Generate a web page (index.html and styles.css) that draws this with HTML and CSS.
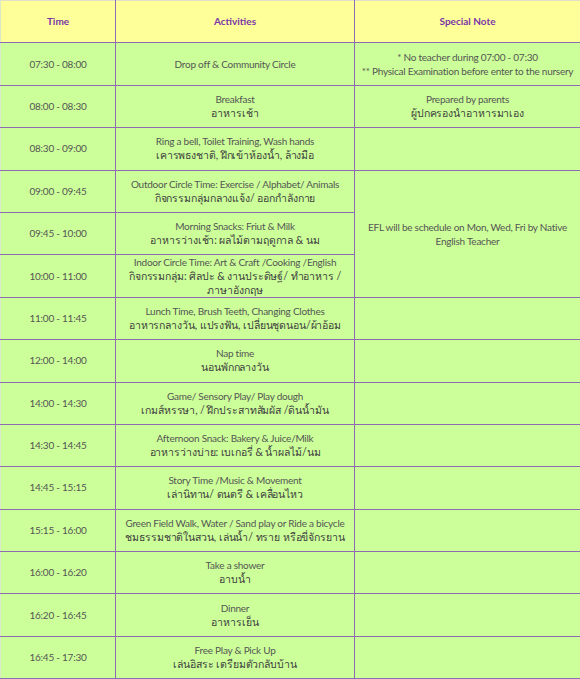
FILE: index.html
```html
<!DOCTYPE html>
<html>
<head>
<meta charset="utf-8">
<link rel="stylesheet" href="styles.css">
</head>
<body>
<table class="schedule">
  <colgroup>
    <col class="c-time">
    <col class="c-act">
    <col class="c-note">
  </colgroup>
  <thead>
    <tr class="head">
      <th>Time</th>
      <th>Activities</th>
      <th>Special Note</th>
    </tr>
  </thead>
  <tbody>
    <tr>
      <td>07:30 - 08:00</td>
      <td>Drop off &amp; Community Circle</td>
      <td class="note"><span class="ln">* No teacher during 07:00 - 07:30</span><span class="ln">** Physical Examination before enter to the nursery</span></td>
    </tr>
    <tr>
      <td>08:00 - 08:30</td>
      <td>Breakfast<br><span class="th">อาหารเช้า</span></td>
      <td>Prepared by parents<br><span class="th">ผู้ปกครองนำอาหารมาเอง</span></td>
    </tr>
    <tr>
      <td>08:30 - 09:00</td>
      <td>Ring a bell, Toilet Training, Wash hands<br><span class="th">เคารพธงชาติ, ฝึกเข้าห้องน้ำ, ล้างมือ</span></td>
      <td></td>
    </tr>
    <tr>
      <td>09:00 - 09:45</td>
      <td>Outdoor Circle Time: Exercise / Alphabet/ Animals<br><span class="th">กิจกรรมกลุ่มกลางแจ้ง/ ออกกำลังกาย</span></td>
      <td rowspan="3" class="efl">EFL will be schedule on Mon, Wed, Fri by Native English Teacher</td>
    </tr>
    <tr>
      <td>09:45 - 10:00</td>
      <td>Morning Snacks: Friut &amp; Milk<br><span class="th">อาหารว่างเช้า: ผลไม้ตามฤดูกาล &amp; นม</span></td>
    </tr>
    <tr>
      <td>10:00 - 11:00</td>
      <td class="tight">Indoor Circle Time: Art &amp; Craft /Cooking /English<br><span class="th">กิจกรรมกลุ่ม: ศิลปะ &amp; งานประดิษฐ์/ ทำอาหาร /<br>ภาษาอังกฤษ</span></td>
    </tr>
    <tr>
      <td>11:00 - 11:45</td>
      <td>Lunch Time, Brush Teeth, Changing Clothes<br><span class="th">อาหารกลางวัน, แปรงฟัน, เปลี่ยนชุดนอน/ผ้าอ้อม</span></td>
      <td></td>
    </tr>
    <tr>
      <td>12:00 - 14:00</td>
      <td>Nap time<br><span class="th">นอนพักกลางวัน</span></td>
      <td></td>
    </tr>
    <tr>
      <td>14:00 - 14:30</td>
      <td>Game/ Sensory Play/ Play dough<br><span class="th">เกมส์หรรษา, / ฝึกประสาทสัมผัส /ดินน้ำมัน</span></td>
      <td></td>
    </tr>
    <tr>
      <td>14:30 - 14:45</td>
      <td>Afternoon Snack: Bakery &amp; Juice/Milk<br><span class="th">อาหารว่างบ่าย: เบเกอรี่ &amp; น้ำผลไม้/นม</span></td>
      <td></td>
    </tr>
    <tr>
      <td>14:45 - 15:15</td>
      <td>Story Time /Music &amp; Movement<br><span class="th">เล่านิทาน/ ดนตรี &amp; เคลื่อนไหว</span></td>
      <td></td>
    </tr>
    <tr>
      <td>15:15 - 16:00</td>
      <td>Green Field Walk, Water / Sand play or Ride a bicycle<br><span class="th">ชมธรรมชาติในสวน, เล่นน้ำ/ ทราย หรือขี่จักรยาน</span></td>
      <td></td>
    </tr>
    <tr>
      <td>16:00 - 16:20</td>
      <td>Take a shower<br><span class="th">อาบน้ำ</span></td>
      <td></td>
    </tr>
    <tr>
      <td>16:20 - 16:45</td>
      <td>Dinner<br><span class="th">อาหารเย็น</span></td>
      <td></td>
    </tr>
    <tr>
      <td>16:45 - 17:30</td>
      <td>Free Play &amp; Pick Up<br><span class="th">เล่นอิสระ เตรียมตัวกลับบ้าน</span></td>
      <td></td>
    </tr>
  </tbody>
</table>
</body>
</html>
```

FILE: styles.css
```css
html, body {
  margin: 0;
  padding: 0;
  background: #ffffff;
}

.schedule {
  width: 580px;
  height: 679px;
  border-collapse: collapse;
  table-layout: fixed;
  font-family: Lato, "Liberation Sans", sans-serif;
  font-size: 10px;
  letter-spacing: -0.25px;
  color: #555555;
}

.c-time { width: 115px; }
.c-act { width: 239px; }
.c-note { width: 226px; }

.schedule tr {
  height: 42.4px;
}

.schedule th,
.schedule td {
  border: 1px solid #8e6cb3;
  text-align: center;
  vertical-align: middle;
  padding: 0 2px;
  line-height: 13px;
  overflow: hidden;
  white-space: nowrap;
}

.schedule tr:first-child th {
  border-top-color: #e0e0c8;
}

.schedule th:first-child,
.schedule td:first-child {
  border-left-color: #d8e8c8;
}

.head th {
  background: #ffff99;
  color: #7a35a8;
  font-weight: bold;
  font-size: 10px;
  letter-spacing: 0;
}

.schedule td {
  background: #ccff99;
}

.th {
  font-size: 10.5px;
  line-height: 14px;
  letter-spacing: -0.1px;
  color: #404040;
}

.note .ln {
  display: block;
  line-height: 14px;
}

.schedule .efl {
  padding: 0 12px;
  line-height: 14px;
  white-space: normal;
}

.tight {
  line-height: 12px;
}
```
